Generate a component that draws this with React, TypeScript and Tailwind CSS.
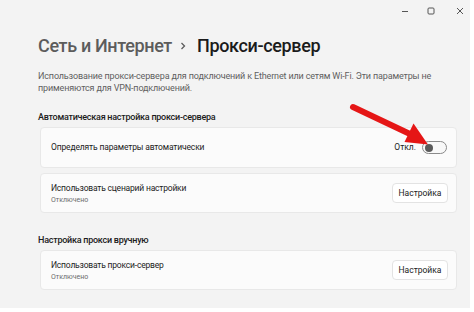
import React from "react";

const font = { fontFamily: 'Roboto, "Noto Sans", sans-serif' };

function Card({ children, className = "" }: { children: React.ReactNode; className?: string }) {
  return (
    <div
      className={
        "ml-[2px] flex items-center justify-between rounded-[4px] border border-[#e8e8e8] bg-[#fbfbfb] pl-[10px] pr-[8px] " +
        className
      }
    >
      {children}
    </div>
  );
}

function Btn() {
  return (
    <div className="flex h-[20px] w-[56px] items-center justify-center rounded-[4px] border border-[#e3e3e3] bg-white text-[8.5px] text-[#1b1b1b]">
      Настройка
    </div>
  );
}

export default function App() {
  return (
    <div
      style={font}
      className="relative h-[312px] w-[474px] overflow-hidden bg-white"
    >
      <div className="h-[308px] w-[470px] bg-[#f3f3f3]">
        {/* title bar */}
        <div className="flex h-[22px] items-center justify-end">
          <svg width="10" height="10" viewBox="0 0 10 10" className="mr-[16px]">
            <line x1="2" y1="5.5" x2="8" y2="5.5" stroke="#555" strokeWidth="1" />
          </svg>
          <svg width="10" height="10" viewBox="0 0 10 10" className="mr-[19px]">
            <rect x="2" y="2" width="6" height="6" rx="1" fill="none" stroke="#555" strokeWidth="1" />
          </svg>
          <svg width="10" height="10" viewBox="0 0 10 10" className="mr-[5px]">
            <path d="M2 2 L8 8 M8 2 L2 8" stroke="#555" strokeWidth="1" />
          </svg>
        </div>

        <div className="pl-[38px] pr-[13px]">
          <div className="mt-[11px] flex h-[26px] items-center whitespace-nowrap text-[18px] font-medium leading-[26px] tracking-[-0.35px]">
            <span className="text-[#5c5c5c]">Сеть и Интернет</span>
            <svg width="8" height="10" viewBox="0 0 8 10" className="ml-[7px] mr-[10px]">
              <path d="M2.5 2 L5.5 5 L2.5 8" fill="none" stroke="#5c5c5c" strokeWidth="1.3" />
            </svg>
            <span className="text-[#1b1b1b]">Прокси-сервер</span>
          </div>

          <p className="mt-[11px] whitespace-nowrap text-[9px] leading-[12px] tracking-[-0.15px] text-[#5f5f5f]">
            Использование прокси-сервера для подключений к Ethernet или сетям Wi-Fi. Эти параметры не
            <br />
            применяются для VPN-подключений.
          </p>

          <div className="mt-[17px] text-[9px] font-medium leading-[12px] tracking-[-0.25px] text-[#1b1b1b]">
            Автоматическая настройка прокси-сервера
          </div>

          <Card className="mt-[4px] h-[41px]">
            <span className="text-[8.5px] tracking-[-0.15px] text-[#1b1b1b]">Определять параметры автоматически</span>
            <div className="flex items-center">
              <span className="mr-[6px] text-[8.5px] text-[#1b1b1b]">Откл.</span>
              <div className="mr-[1px] flex h-[13px] w-[25px] items-center rounded-full border border-[#8a8a8a] bg-[#f8f8f8] pl-[2px]">
                <div className="h-[8px] w-[8px] rounded-full bg-[#5a5a5a]" />
              </div>
            </div>
          </Card>

          <Card className="mt-[5px] h-[40px]">
            <div className="flex flex-col">
              <span className="text-[8.5px] leading-[13px] tracking-[-0.2px] text-[#1b1b1b]">Использовать сценарий настройки</span>
              <span className="text-[7px] leading-[10px] text-[#6b6b6b]">Отключено</span>
            </div>
            <Btn />
          </Card>

          <div className="mt-[21px] text-[9px] font-medium leading-[12px] tracking-[-0.25px] text-[#1b1b1b]">
            Настройка прокси вручную
          </div>

          <Card className="mt-[4px] h-[40px]">
            <div className="flex flex-col">
              <span className="text-[8.5px] leading-[13px] tracking-[-0.2px] text-[#1b1b1b]">Использовать прокси-сервер</span>
              <span className="text-[7px] leading-[10px] text-[#6b6b6b]">Отключено</span>
            </div>
            <Btn />
          </Card>
        </div>
      </div>

      {/* red arrow overlay */}
      <svg className="absolute left-0 top-0" width="474" height="312" viewBox="0 0 474 312">
        <line x1="353" y1="107" x2="410" y2="134" stroke="#e51616" strokeWidth="6" strokeLinecap="round" />
        <polygon points="428,144.5 404.5,142 413.5,123.5" fill="#e51616" />
      </svg>
    </div>
  );
}
